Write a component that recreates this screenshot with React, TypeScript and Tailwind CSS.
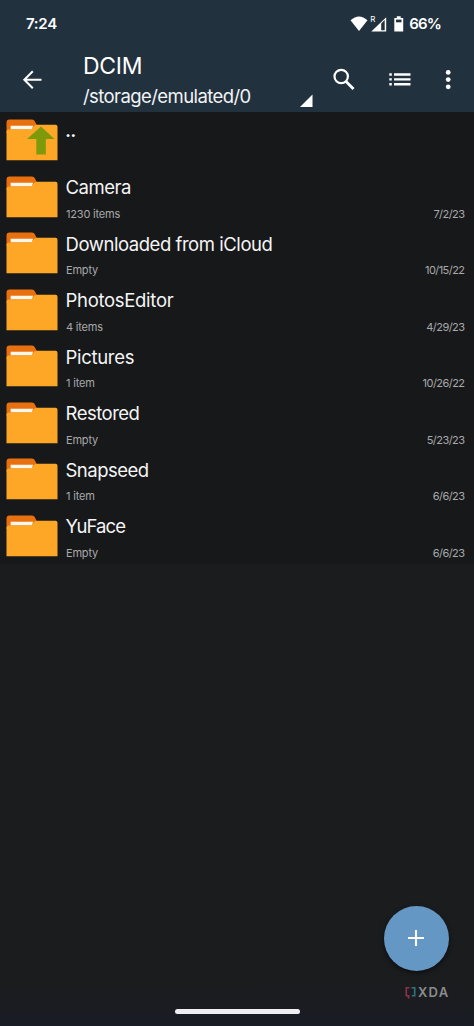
import React from 'react';

interface Folder {
  name: string;
  info: string;
  date: string;
  nameClass: string;
}

const folders: Folder[] = [
  { name: 'Camera', info: '1230 items', date: '7/2/23', nameClass: 'tracking-[-0.45px]' },
  { name: 'Downloaded from iCloud', info: 'Empty', date: '10/15/22', nameClass: 'tracking-[-0.45px]' },
  { name: 'PhotosEditor', info: '4 items', date: '4/29/23', nameClass: 'tracking-[-0.3px]' },
  { name: 'Pictures', info: '1 item', date: '10/26/22', nameClass: 'tracking-[-0.3px]' },
  { name: 'Restored', info: 'Empty', date: '5/23/23', nameClass: 'tracking-[-0.5px]' },
  { name: 'Snapseed', info: '1 item', date: '6/6/23', nameClass: 'tracking-[-0.5px]' },
  { name: 'YuFace', info: 'Empty', date: '6/6/23', nameClass: 'tracking-[-0.9px]' }
];

function FolderIcon({ up = false }: { up?: boolean }) {
  return (
    <svg width="52" height="42" viewBox="0 0 52 42" className="shrink-0">
      <path d="M0.5 14V3.5Q0.5 0.5 3.5 0.5H26Q28 0.5 28.8 2.2L31 6.5V14Z" fill="#e8700f" />
      <path d="M0.5 13Q0.5 10.5 3 10.5H24.5L28.3 6.7Q29.3 5.7 30.8 5.7H49.5Q51.5 5.7 51.5 7.7V41.3H0.5Z" fill="#fea726" />
      <path d="M4.6 6.8H27.2L25.5 10.2H4.6Z" fill="#fff8ea" />
      {up && <path d="M35 7.5L48.5 20H39.8V35.5H30.3V20H21Z" fill="#7e9a0a" />}
    </svg>
  );
}

function StatusBar() {
  return (
    <div className="flex h-12 items-center justify-between pl-[26px] pr-[33px] text-[15px] font-semibold">
      <span className="tracking-[-0.3px]">7:24</span>
      <div className="flex items-center">
        <svg width="55" height="20" viewBox="0 0 55 20" fill="#fff">
          <path d="M0.5 6.3Q9 -1.5 17.5 6.3L9 17Z" />
          <path d="M36.2 3.3V17.5H21.3Z" />
          <path d="M31.2 9.5L34.7 6V16.2H31.2Z" fill="#22313e" />
          <path d="M46.8 2.3H50.7V4H53.2V17.5H44.3V4H46.8Z" />
          <path d="M46 5.6H51.5V8.3H46Z" fill="#22313e" />
          <text x="20.3" y="8.3" fontSize="8" fontFamily="Inter, sans-serif" fontWeight="400">R</text>
        </svg>
        <span className="ml-[4px] tracking-[-0.8px]">66%</span>
      </div>
    </div>
  );
}

function Toolbar() {
  return (
    <div className="flex h-16 pl-5">
      <svg width="24" height="24" viewBox="0 0 24 24" className="mt-5 shrink-0" fill="none" stroke="#fff" strokeWidth="2">
        <path d="M21.5 11.7H4.5M12.8 3.2L4.3 11.7L12.8 20.2" />
      </svg>
      <div className="ml-[38px] w-[217px] shrink-0 pt-1">
        <h1 className="pl-px text-[23px] leading-[29px] tracking-[-0.3px]">DCIM</h1>
        <p className="-mt-px pl-px text-[18.5px] leading-[32px] tracking-[-0.58px] text-[#f2f4f6]">/storage/emulated/0</p>
      </div>
      <svg width="14" height="14" viewBox="0 0 14 14" className="mt-[46px] shrink-0">
        <path d="M13.5 0.5V13H1Z" fill="#fff" />
      </svg>
      <svg width="24" height="24" viewBox="0 0 24 24" className="ml-[19px] mt-5 shrink-0" fill="none" stroke="#fff">
        <circle cx="9.2" cy="8.5" r="6.7" strokeWidth="2.2" />
        <path d="M13.8 13.3L21.5 21" strokeWidth="2.8" />
      </svg>
      <svg width="24" height="18" viewBox="0 0 24 18" className="ml-[32px] mt-[23px] shrink-0" fill="#fff">
        <path d="M1.3 2.3H3.8V4.7H1.3ZM6 2.3H22.5V4.7H6ZM1.3 7.2H3.8V9.6H1.3ZM6 7.2H22.5V9.6H6ZM1.3 12.1H3.8V14.5H1.3ZM6 12.1H22.5V14.5H6Z" />
      </svg>
      <svg width="8" height="24" viewBox="0 0 8 24" className="ml-[32px] mt-5 shrink-0" fill="#fff">
        <circle cx="4.2" cy="4.4" r="2.4" />
        <circle cx="4.2" cy="11.6" r="2.4" />
        <circle cx="4.2" cy="18.8" r="2.4" />
      </svg>
    </div>
  );
}

function FolderRow({ folder }: { folder: Folder }) {
  return (
    <div className="flex h-[56.55px] pl-1.5 pr-[9.5px] pt-[7px]">
      <FolderIcon />
      <div className="-mt-[0.5px] ml-2 flex-1">
        <p className={`-ml-[0.5px] text-[18.5px] leading-6 text-[#f5f5f5] ${folder.nameClass}`}>{folder.name}</p>
        <div className="mt-[5.5px] flex justify-between text-[11px] leading-[18px] text-[#a9a9aa]">
          <span className="tracking-[-0.2px]">{folder.info}</span>
          <span className="tracking-[-0.55px]">{folder.date}</span>
        </div>
      </div>
    </div>
  );
}

export default function App() {
  return (
    <div className="relative flex h-[1026px] w-[474px] flex-col overflow-hidden bg-[#1b1c1e] font-['Inter',sans-serif] text-white">
      <header className="h-28 bg-[#22313e]">
        <StatusBar />
        <Toolbar />
      </header>
      <main className="bg-[#17181a]">
        <div className="flex h-[56.5px] pl-1.5 pt-[7px]">
          <FolderIcon up />
          <p className="-mt-[1.5px] ml-[7px] text-[20px] font-medium leading-6 tracking-[-0.8px]">..</p>
        </div>
        {folders.map(folder => (
          <FolderRow key={folder.name} folder={folder} />
        ))}
      </main>
      <div className="mt-auto flex h-[42px] items-center justify-center bg-linear-to-b from-[#1b1c1e] to-[#191c24]">
        <div className="mt-[13px] h-[5px] w-[125px] rounded-full bg-[#eeeef3]" />
      </div>
      <button className="absolute left-[384px] top-[906px] flex size-[65px] items-center justify-center rounded-full bg-[#6497c4] shadow-[0_2px_5px_rgba(0,0,0,0.55)]">
        <svg width="18" height="18" viewBox="0 0 18 18" className="-ml-px -mt-px" stroke="#fff" strokeWidth="2.1">
          <path d="M9 1V17M1 9H17" />
        </svg>
      </button>
      <div className="absolute left-[405px] top-[986px] flex h-[14px] items-center">
        <svg width="12" height="14" viewBox="0 0 12 14" fill="none" strokeWidth="1.6">
          <path d="M4.5 1.8H1.3V9.8H3.6V12.5" stroke="#92304a" />
          <path d="M6.5 1.8H9.7V9.8H6.8" stroke="#2c7580" />
        </svg>
        <span className="-mt-[2px] ml-px text-[13px] font-semibold leading-[14px] tracking-[1.2px] text-[#8b8b8d]">XDA</span>
      </div>
    </div>
  );
}
